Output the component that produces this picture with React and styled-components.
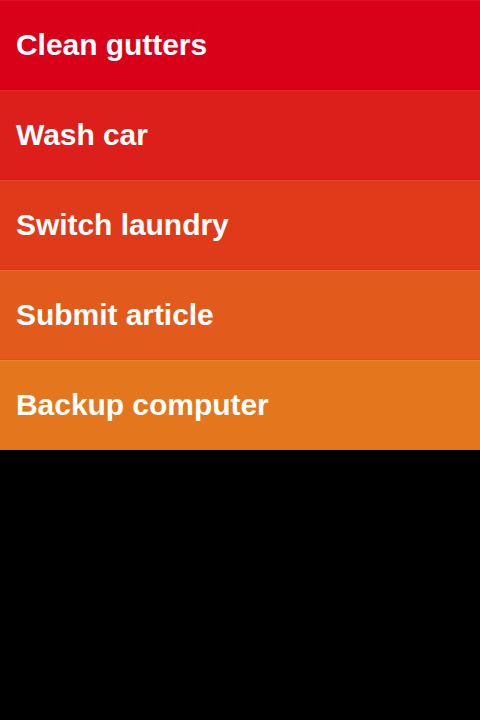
import React from "react";
import styled, { createGlobalStyle } from "styled-components";

const Global = createGlobalStyle`
  html, body { margin: 0; padding: 0; background: #000; }
  #root { width: 480px; height: 720px; background: #000; }
`;

const List = styled.ul`
  margin: 0;
  padding: 0;
  list-style: none;
  display: flex;
  flex-direction: column;
`;

const Row = styled.li`
  box-sizing: border-box;
  height: 90px;
  display: flex;
  align-items: center;
  padding: 0 15px 0 16px;
  background: ${(p) => p.$bg};
  border-top: 1px solid ${(p) => p.$hi};
  border-bottom: 1px solid ${(p) => p.$lo};
  color: #fff;
  font-family: "Liberation Sans", Arial, sans-serif;
  font-weight: bold;
  font-size: 30px;
  letter-spacing: -0.05px;
`;

const items = [
  { t: "Clean gutters", bg: "#d9001a", hi: "#e0102a", lo: "#d0001a" },
  { t: "Wash car", bg: "#dc1f1a", hi: "#e32d25", lo: "#d31a16" },
  { t: "Switch laundry", bg: "#df3a19", hi: "#e64a28", lo: "#d63516" },
  { t: "Submit article", bg: "#e25a1c", hi: "#e8682a", lo: "#d95218" },
  { t: "Backup computer", bg: "#e4761d", hi: "#ea842b", lo: "#da6e1a" },
];

export default function App() {
  return (
    <>
      <Global />
      <List>
        {items.map((i) => (
          <Row key={i.t} $bg={i.bg} $hi={i.hi} $lo={i.lo}>
            {i.t}
          </Row>
        ))}
      </List>
    </>
  );
}
